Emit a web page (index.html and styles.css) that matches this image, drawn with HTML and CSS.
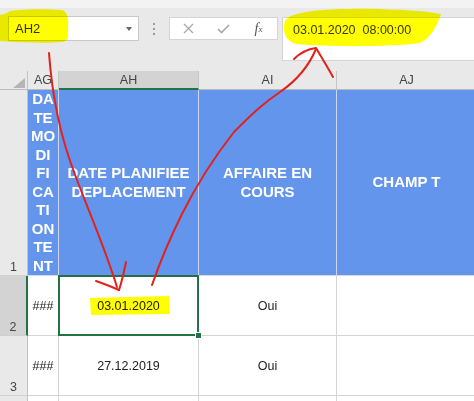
FILE: index.html
```html
<!DOCTYPE html>
<html>
<head>
<meta charset="utf-8">
<link rel="stylesheet" href="styles.css">
</head>
<body>
<div class="page">
  <div class="topstrip"></div>
  <div class="toolbar">
    <div class="namebox"><span class="name">AH2</span><span class="caret"></span></div>
    <div class="dots"><i></i><i></i><i></i></div>
    <div class="fxbtns">
      <span class="btn"><svg width="11" height="11" viewBox="0 0 11 11"><path d="M1 1 L10 10 M10 1 L1 10" stroke="#a8a8a8" stroke-width="1.3" fill="none"/></svg></span>
      <span class="btn"><svg width="13" height="10" viewBox="0 0 13 10"><path d="M1 5 L4.5 8.5 L12 1" stroke="#a8a8a8" stroke-width="1.6" fill="none"/></svg></span>
      <span class="btn fx">f<sub>x</sub></span>
    </div>
    <div class="formula">03.01.2020&nbsp;&nbsp;08:00:00</div>
  </div>
  <div class="grid">
    <div class="cell corner"><svg width="12" height="10" viewBox="0 0 12 10"><path d="M12 0 L12 10 L0 10 Z" fill="#b5b5b5"/></svg></div>
    <div class="cell colhead">AG</div>
    <div class="cell colhead sel">AH</div>
    <div class="cell colhead">AI</div>
    <div class="cell colhead">AJ</div>

    <div class="cell rowhead">1</div>
    <div class="cell hdr">DA<br>TE<br>MO<br>DI<br>FI<br>CA<br>TI<br>ON<br>TE<br>NT</div>
    <div class="cell hdr">DATE PLANIFIEE<br>DEPLACEMENT</div>
    <div class="cell hdr">AFFAIRE EN<br>COURS</div>
    <div class="cell hdr">CHAMP T</div>

    <div class="cell rowhead sel">2</div>
    <div class="cell data">###</div>
    <div class="cell data active">03.01.2020</div>
    <div class="cell data">Oui</div>
    <div class="cell data"></div>

    <div class="cell rowhead">3</div>
    <div class="cell data">###</div>
    <div class="cell data">27.12.2019</div>
    <div class="cell data">Oui</div>
    <div class="cell data"></div>

    <div class="cell rowhead"></div>
    <div class="cell data"></div>
    <div class="cell data"></div>
    <div class="cell data"></div>
    <div class="cell data"></div>
  </div>
  <svg class="overlay hl" width="474" height="401" viewBox="0 0 474 401">
    <path d="M0,15 C4,14 8,13 10,11 C25,9 45,9 62,10 C68,12 69,20 68,28 C68,35 69,40 63,42 C45,43.5 20,42.5 0,41 Z" fill="#ffff00"/>
    <path d="M285,21 C289,11 330,8 380,9 C405,10 425,11 441,14 C437,25 432,37 420,43 C390,47 330,47 296,44 C285,41 282,31 285,21 Z" fill="#ffff00"/>
    <path d="M90,298 L169,296 L170,314 L91,315 Z" fill="#ffff00"/>
  </svg>
  <svg class="overlay ink" width="474" height="401" viewBox="0 0 474 401">
    <g stroke="#e3211c" stroke-width="2" fill="none" stroke-linecap="round">
      <path d="M49,53 C52,95 60,135 74,172 C88,210 104,245 117,287"/>
      <path d="M96,281 C105,284 112,287 119,290"/>
      <path d="M126,262 C124,272 122,281 119,290"/>
      <path d="M152,285 C160,262 170,238 182,214 C196,186 212,160 234,132 C250,116 262,104 280,92 C296,81 308,68 316,49"/>
      <path d="M294,59 C300,53 308,49 316,48 C322,58 328,68 333,77"/>
    </g>
  </svg>
</div>
</body>
</html>
```
FILE: styles.css
```css
html, body {
  margin: 0;
  padding: 0;
  background: #fff;
}

.page {
  width: 474px;
  height: 401px;
  position: relative;
  overflow: hidden;
  font-family: "Liberation Sans", Arial, sans-serif;
}

.topstrip {
  height: 8px;
  background: #f3f3f3;
}

.toolbar {
  height: 63px;
  box-sizing: border-box;
  background: #e9e9e9;
  display: flex;
  align-items: flex-start;
  padding-left: 8px;
}

.namebox {
  margin-top: 8px;
  width: 131px;
  height: 25px;
  box-sizing: border-box;
  background: #fff;
  border: 1px solid #c8c8c8;
  display: flex;
  align-items: center;
  justify-content: space-between;
  padding: 0 6px 0 6px;
  font-size: 13px;
  color: #333;
}

.caret {
  width: 0;
  height: 0;
  border-left: 3px solid transparent;
  border-right: 3px solid transparent;
  border-top: 4px solid #666;
}

.dots {
  width: 30px;
  margin-top: 15px;
  display: flex;
  flex-direction: column;
  align-items: center;
  gap: 3px;
}

.dots i {
  display: block;
  width: 2px;
  height: 2px;
  background: #9a9a9a;
}

.fxbtns {
  margin-top: 9px;
  width: 109px;
  height: 23px;
  box-sizing: border-box;
  background: #fff;
  border: 1px solid #d4d4d4;
  display: flex;
  padding: 0 1px;
}

.btn {
  width: 35px;
  display: flex;
  align-items: center;
  justify-content: center;
}

.fx {
  font-family: "Liberation Serif", "Times New Roman", serif;
  font-style: italic;
  font-size: 14px;
  color: #555;
}

.fx sub {
  font-size: 9px;
  vertical-align: -2px;
}

.formula {
  margin-left: 4px;
  margin-top: 9px;
  flex: 1;
  height: 44px;
  box-sizing: border-box;
  background: #fff;
  border: 1px solid #d4d4d4;
  border-right: none;
  padding: 5px 0 0 10px;
  font-size: 12.5px;
  color: #3a3a3a;
}

.grid {
  display: grid;
  grid-template-columns: 28px 31px 140px 138px 140px;
  grid-template-rows: 19px 186px 60px 60px 40px;
  background: #fff;
}

.cell {
  box-sizing: border-box;
  border-right: 1px solid #d4d4d4;
  border-bottom: 1px solid #d4d4d4;
  min-width: 0;
}

.corner {
  background: #e9e9e9;
  border-right-color: #c2c2c2;
  border-bottom-color: #bcbcbc;
  display: flex;
  align-items: flex-end;
  justify-content: flex-end;
  padding: 0 2px 1px 0;
}

.colhead {
  background: #e9e9e9;
  border-right-color: #c6c6c6;
  border-bottom-color: #bcbcbc;
  display: flex;
  align-items: center;
  justify-content: center;
  font-size: 12.5px;
  color: #444;
}

.colhead.sel {
  background: #d3d3d3;
  border-bottom: 2px solid #217346;
}

.rowhead {
  background: #e9e9e9;
  border-right-color: #c2c2c2;
  border-bottom-color: #d0d0d0;
  display: flex;
  align-items: flex-end;
  justify-content: center;
  padding-bottom: 1px;
  font-size: 12.5px;
  color: #444;
}

.rowhead.sel {
  background: #d3d3d3;
  border-right: 2px solid #217346;
}

.hdr {
  background: #6495ed;
  color: #fff;
  font-weight: bold;
  font-size: 15px;
  line-height: 18.5px;
  display: flex;
  align-items: center;
  justify-content: center;
  text-align: center;
  border-right-color: #cdd8ee;
  border-bottom-color: #d8d8d8;
}

.data {
  display: flex;
  align-items: center;
  justify-content: center;
  font-size: 12.5px;
  color: #222;
}

.active {
  position: relative;
}

.active::after {
  content: "";
  position: absolute;
  left: -1px;
  top: -1px;
  right: -1px;
  bottom: -1px;
  border: 2px solid #217346;
}

.active::before {
  content: "";
  position: absolute;
  right: -4px;
  bottom: -4px;
  width: 5px;
  height: 5px;
  background: #217346;
  border: 1px solid #fff;
  z-index: 2;
}

.overlay {
  position: absolute;
  left: 0;
  top: 0;
  pointer-events: none;
}

.hl {
  mix-blend-mode: multiply;
}
```
